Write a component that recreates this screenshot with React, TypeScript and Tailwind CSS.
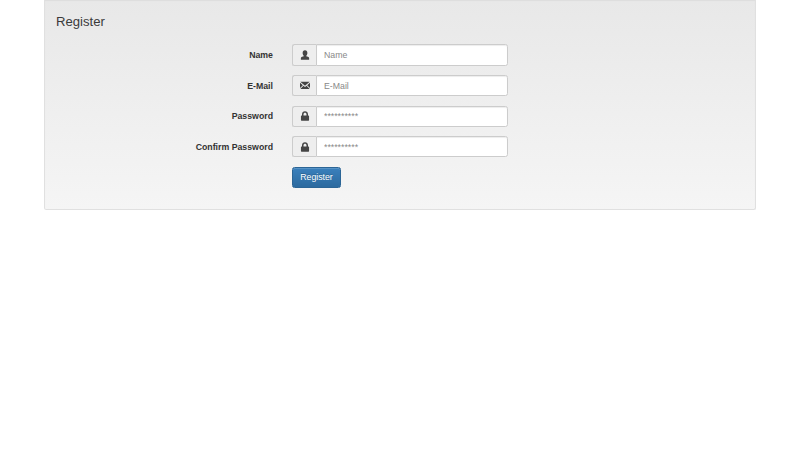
import React from "react";

const UserIcon = () => (
  <svg width="10" height="10" viewBox="0 0 16 16" className="fill-[#444]">
    <path d="M8 0.500c2.400 0 3.800 1.800 3.800 4.200 0 1.700-.7 3.400-1.800 4.300v1.100c1.200.5 4.600 1.200 4.600 2.800v2.600H1.400v-2.600c0-1.600 3.400-2.300 4.600-2.800V9C4.900 8.100 4.200 6.400 4.200 4.700 4.200 2.300 5.600.5 8 .5z" />
  </svg>
);

const MailIcon = () => (
  <svg width="10" height="9" viewBox="0 0 16 14" className="fill-[#444]">
    <path d="M0.500 1h15L8 7.500z" />
    <path d="M0 2.500l4.600 4L0 11zM16 2.500l-4.600 4L16 11z" />
    <path d="M5.500 7.300L8 9.400l2.500-2.100 5 5.200H0.500z" />
  </svg>
);

const LockIcon = () => (
  <svg width="10" height="10" viewBox="0 0 16 16" className="fill-[#444]">
    <path
      fillRule="evenodd"
      d="M8 .5c2.900 0 4.800 2 4.800 4.700V7h.7c.6 0 1 .4 1 1v6.500c0 .6-.4 1-1 1h-11c-.6 0-1-.4-1-1V8c0-.6.4-1 1-1h.7V5.200C3.200 2.500 5.100.5 8 .5zM8 2.700c-1.500 0-2.400 1-2.400 2.500V7h4.800V5.200c0-1.500-.9-2.500-2.400-2.500z"
    />
  </svg>
);

function Row({ label, placeholder, icon }: { label: string; placeholder: string; icon: React.ReactNode }) {
  return (
    <div className="flex h-[21.25px] items-center">
      <label className="w-[217px] pt-[1.500px] text-right font-bold text-[8.75px] text-[#333]">{label}</label>
      <div className="ml-[19px] flex h-full w-[216px]">
        <span className="flex w-[24px] items-center justify-center rounded-l-[2.5px] border border-r-0 border-[#ccc] bg-[#eee]">
          {icon}
        </span>
        <input
          readOnly
          placeholder={placeholder}
          className="h-full min-w-0 flex-1 rounded-r-[2.5px] border border-[#ccc] bg-white px-[7px] text-[8.75px] text-[#555] shadow-[inset_0_1px_1px_rgba(0,0,0,0.075)] outline-none placeholder:text-[#888]"
        />
      </div>
    </div>
  );
}

export default function App() {
  return (
    <div className="h-[450px] w-full bg-white px-[44px] font-['Liberation_Sans',Arial,sans-serif] text-[#333]">
      <div className="h-[210px] rounded-b-[2.5px] border border-t-0 border-[#e0e0e0] bg-linear-to-b from-[#e8e8e8] to-[#f5f5f5] px-[11px] shadow-[inset_0_1px_1px_rgba(0,0,0,0.05)]">
        <h1 className="pt-[14px] text-[13.125px] leading-[16px] font-normal text-[#3a3a3a]">Register</h1>
        <div className="mt-[14.300px] flex flex-col gap-[9.400px]">
          <Row label="Name" placeholder="Name" icon={<UserIcon />} />
          <Row label="E-Mail" placeholder="E-Mail" icon={<MailIcon />} />
          <Row label="Password" placeholder="**********" icon={<LockIcon />} />
          <Row label="Confirm Password" placeholder="**********" icon={<LockIcon />} />
          <div className="ml-[236px] flex">
            <button className="h-[21.25px] w-[49px] rounded-[2.5px] border border-[#2b6596] bg-linear-to-b from-[#3a80bc] to-[#2c6a9f] text-[8.75px] text-white [text-shadow:0_-1px_0_rgba(0,0,0,0.2)] shadow-[inset_0_1px_0_rgba(255,255,255,0.15)]">
              Register
            </button>
          </div>
        </div>
      </div>
    </div>
  );
}
